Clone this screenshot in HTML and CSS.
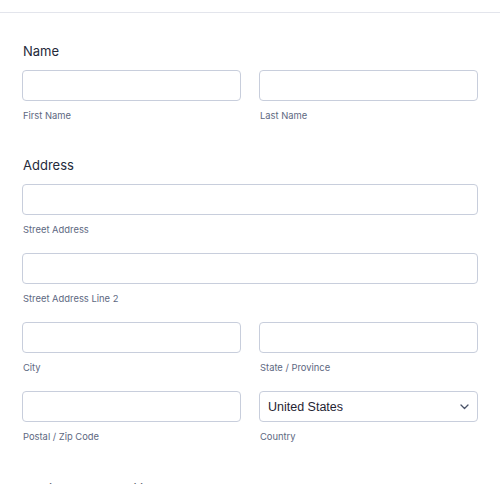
FILE: index.html
```html
<!DOCTYPE html>
<html lang="en">
<head>
    <meta charset="UTF-8">
    <meta name="viewport" content="width=device-width, initial-scale=1.0">
    <title>Address Form</title>
    <link rel="stylesheet" href="styles.css">
</head>
<body>
    <div class="top-bar"></div>

    <form class="form">
        <div class="section">
            <label class="section-label">Name</label>
            <div class="row two">
                <div class="field">
                    <input type="text" class="text-input" />
                    <span class="sub-label">First Name</span>
                </div>
                <div class="field">
                    <input type="text" class="text-input" />
                    <span class="sub-label">Last Name</span>
                </div>
            </div>
        </div>

        <div class="section">
            <label class="section-label">Address</label>
            <div class="row">
                <div class="field">
                    <input type="text" class="text-input" />
                    <span class="sub-label">Street Address</span>
                </div>
            </div>
            <div class="row">
                <div class="field">
                    <input type="text" class="text-input" />
                    <span class="sub-label">Street Address Line 2</span>
                </div>
            </div>
            <div class="row two">
                <div class="field">
                    <input type="text" class="text-input" />
                    <span class="sub-label">City</span>
                </div>
                <div class="field">
                    <input type="text" class="text-input" />
                    <span class="sub-label">State / Province</span>
                </div>
            </div>
            <div class="row two">
                <div class="field">
                    <input type="text" class="text-input" />
                    <span class="sub-label">Postal / Zip Code</span>
                </div>
                <div class="field">
                    <div class="select-wrap">
                        <select class="text-input select-input">
                            <option>United States</option>
                        </select>
                        <svg class="chevron" width="9" height="6" viewBox="0 0 9 6">
                            <path d="M1 1l3.5 3.5L8 1" fill="none" stroke="#4a5368" stroke-width="1.3" stroke-linecap="round" stroke-linejoin="round"/>
                        </svg>
                    </div>
                    <span class="sub-label">Country</span>
                </div>
            </div>
        </div>

        <div class="section section-mailing">
            <label class="section-label">Is this also the Mailing Address?</label>
        </div>
    </form>
</body>
</html>
```

FILE: styles.css
```css
body {
    margin: 0;
    font-family: 'Inter', 'Noto Sans', sans-serif;
    background-color: #ffffff;
    color: #2c3345;
}

.top-bar {
    height: 12px;
    border-bottom: 1px solid #e3e5ec;
}

.form {
    padding: 28px 22px 0 22px;
}

.section {
    margin-bottom: 33px;
}

.section-mailing {
    padding-top: 3px;
}

.section-label {
    display: block;
    padding-left: 1px;
    font-size: 13px;
    font-weight: 400;
    line-height: 21px;
    margin-bottom: 8px;
    color: #242a3b;
}

.row {
    display: grid;
    grid-template-columns: 1fr;
    gap: 18px;
    margin-bottom: 17px;
}

.row:last-child {
    margin-bottom: 0;
}

.row.two {
    grid-template-columns: 1fr 1fr;
}

.field {
    display: flex;
    flex-direction: column;
}

.text-input {
    box-sizing: border-box;
    width: 100%;
    height: 31px;
    margin: 0;
    border: 1px solid #c8cedc;
    border-radius: 4px;
    background-color: #ffffff;
    font-family: inherit;
    font-size: 14px;
    color: #2c3345;
    padding: 0 9px;
}

.select-wrap {
    position: relative;
}

.select-input {
    appearance: none;
    -webkit-appearance: none;
    padding-left: 8px;
    font-family: 'Liberation Sans', Arial, sans-serif;
    font-size: 12.5px;
    color: #1f2433;
}

.chevron {
    position: absolute;
    right: 9px;
    top: 13px;
    pointer-events: none;
}

.sub-label {
    display: block;
    margin-top: 8px;
    padding-left: 1px;
    font-size: 9.4px;
    line-height: 13px;
    color: #5d6881;
}
```
